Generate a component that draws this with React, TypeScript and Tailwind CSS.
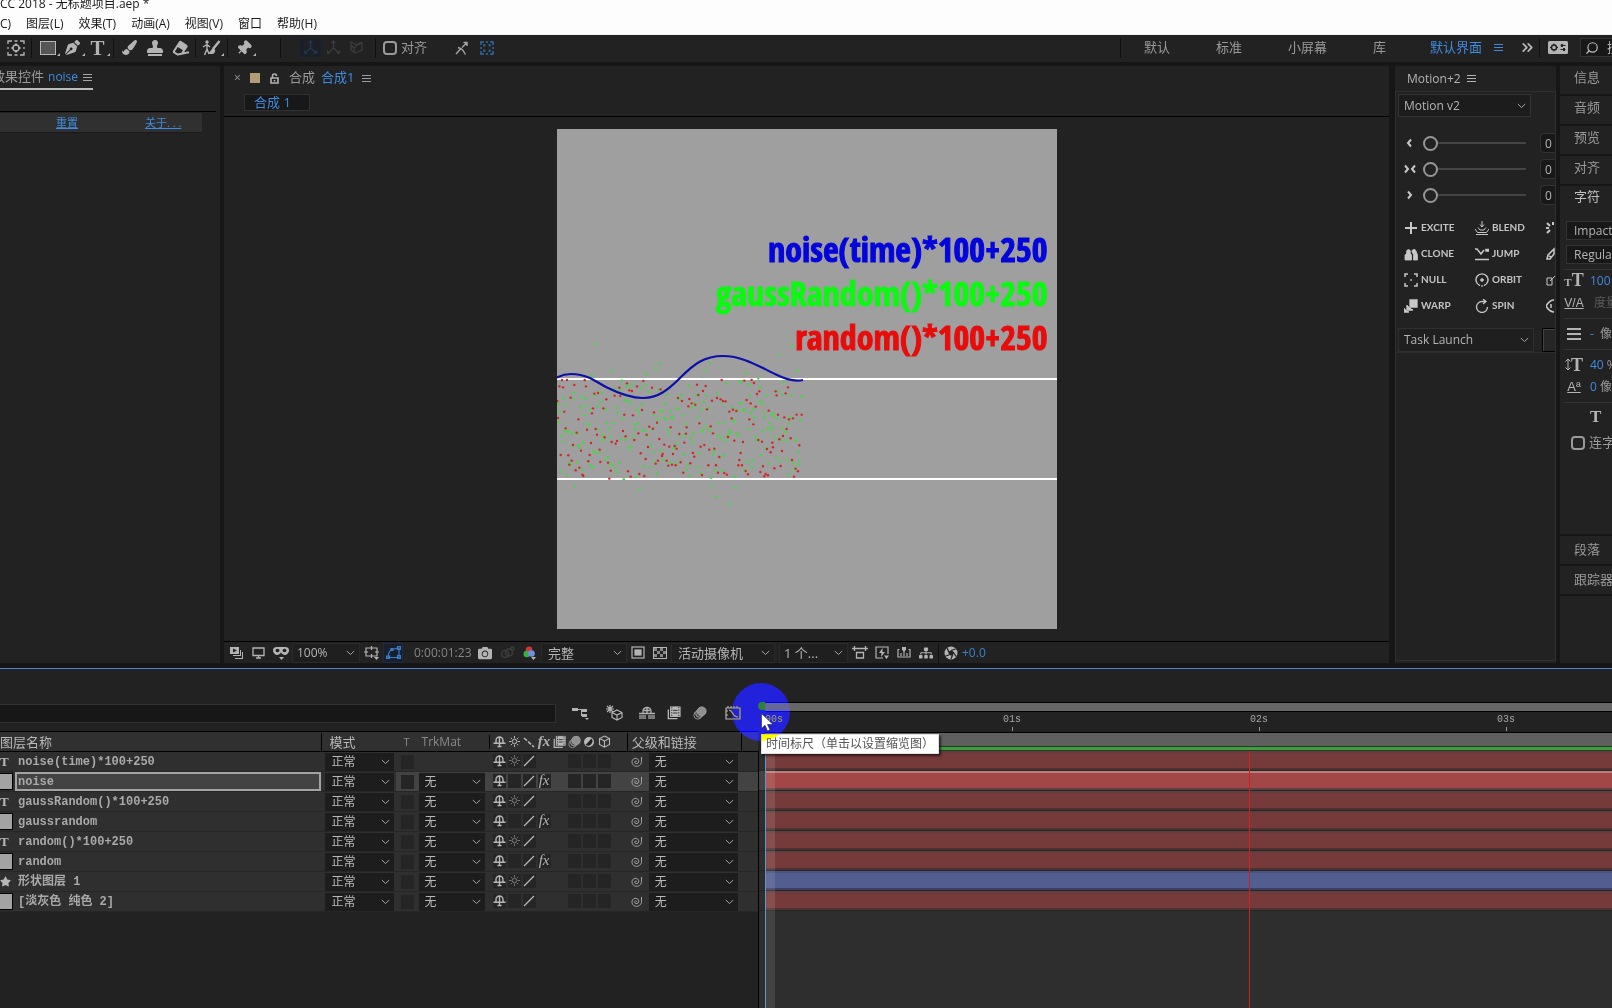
import { clsx } from 'clsx';
import { ChevronsRight, Pin, Search } from 'lucide-react';
import { FaCamera, FaEraser, FaPaintBrush, FaPenNib, FaSitemap, FaStamp, FaStar } from 'react-icons/fa';

const MENUS = ['C)', '图层(L)', '效果(T)', '动画(A)', '视图(V)', '窗口', '帮助(H)'];

const LAYERS = [
  { name: 'noise(time)*100+250', kind: 'text', fx: false, sun: true, matte: false },
  { name: 'noise', kind: 'solid', fx: true, sun: false, matte: true, selected: true },
  { name: 'gaussRandom()*100+250', kind: 'text', fx: false, sun: true, matte: true },
  { name: 'gaussrandom', kind: 'solid', fx: true, sun: false, matte: true },
  { name: 'random()*100+250', kind: 'text', fx: false, sun: true, matte: true },
  { name: 'random', kind: 'solid', fx: true, sun: false, matte: true },
  { name: '形状图层 1', kind: 'shape', fx: false, sun: true, matte: true },
  { name: '[淡灰色 纯色 2]', kind: 'solid', fx: false, sun: false, matte: true },
];

// samples of random(), in thirds of a composition pixel
const RED_DOTS = [
  [66, 90], [81, 90], [134, 90], [103, 105], [58, 109], [69, 112], [138, 109], [92, 143], [52, 153], [73, 185],
  [54, 204], [163, 131], [174, 129], [199, 148], [159, 175], [156, 190], [190, 175], [115, 208], [77, 235], [110, 248],
  [141, 239], [167, 237], [171, 254], [194, 262], [99, 285], [153, 279], [179, 299], [123, 302], [62, 315], [85, 316],
  [95, 332], [88, 344], [149, 315], [145, 334], [181, 336], [204, 338], [118, 353], [107, 361], [127, 374], [130, 378],
  [212, 362], [208, 386], [238, 113], [224, 137], [241, 138], [261, 100], [268, 121], [276, 123], [291, 109], [310, 93],
  [336, 113], [362, 118], [253, 194], [279, 196], [306, 180], [342, 187], [351, 218], [328, 230], [339, 236], [249, 243],
  [257, 259], [295, 250], [283, 270], [320, 254], [215, 276], [231, 273], [227, 281], [358, 267], [324, 291], [302, 310],
  [317, 327], [373, 284], [388, 290], [404, 288], [410, 296], [368, 312], [366, 318], [399, 312], [354, 332], [347, 341],
  [380, 332], [385, 347], [396, 344], [407, 346], [422, 337], [264, 364], [272, 380], [298, 372], [313, 378], [430, 368],
  [414, 144], [426, 153], [448, 147], [455, 160], [466, 164], [445, 169], [471, 104], [497, 108], [489, 123], [475, 135],
  [516, 152], [531, 144], [542, 148], [549, 153], [557, 154], [545, 90], [501, 178], [568, 185], [579, 179], [589, 183],
  [575, 205], [392, 232], [440, 232], [418, 252], [438, 251], [478, 220], [512, 229], [519, 250], [433, 278], [482, 290],
  [493, 285], [508, 299], [523, 296], [459, 309], [463, 320], [451, 340], [538, 321], [505, 346], [528, 346], [486, 375],
  [534, 368], [553, 369], [561, 374], [564, 261], [583, 272], [609, 276], [602, 309], [598, 330], [595, 346], [606, 346],
  [617, 363], [624, 373], [613, 92], [635, 90], [642, 99], [658, 124], [651, 132], [620, 150], [632, 160], [647, 170],
  [686, 182], [628, 208], [640, 223], [707, 124], [710, 136], [744, 112], [737, 130], [714, 194], [733, 202], [747, 208],
  [759, 205], [770, 194], [785, 194], [740, 237], [729, 258], [718, 268], [752, 265], [655, 270], [666, 275], [697, 278],
  [699, 292], [681, 297], [692, 307], [726, 303], [778, 286], [756, 330], [722, 348], [703, 355], [669, 349], [661, 366],
  [677, 372], [684, 376], [673, 379], [767, 356], [774, 364], [762, 380],
];

// samples of gaussRandom(), spread around the middle of the band
const GREEN_DOTS = (() => {
  let seed = 71;
  const rand = () => {
    seed = (seed * 16807) % 2147483647;
    return seed / 2147483647;
  };
  return Array.from({ length: 260 }, (_, i) => {
    const g = rand() + rand() + rand() + rand() - 2;
    return [i * 0.94 + 1, 298 + g * 52];
  });
})();

function MenuLines({ className }: { className?: string }) {
  return (
    <svg width="9" height="9" viewBox="0 0 9 9" className={className} stroke="currentColor">
      <path d="M0 1.5h9M0 4.5h9M0 7.5h9" />
    </svg>
  );
}

function Chevron() {
  return (
    <svg width="9" height="6" viewBox="0 0 9 6" fill="none" stroke="#a5a5a5" className="pointer-events-none absolute right-1 top-1/2 -mt-[3px]">
      <path d="M.8 1l3.7 3.5L8.200 1" />
    </svg>
  );
}

function Dropdown({ label, value, className, selectClass }: { label: string; value: string; className?: string; selectClass?: string }) {
  return (
    <div className={clsx('relative shrink-0', className)}>
      <select aria-label={label} className={clsx('block h-full w-full appearance-none outline-none', selectClass)}>
        <option>{value}</option>
      </select>
      <Chevron />
    </div>
  );
}

function Sep() {
  return (
    <div className="flex w-[7px] shrink-0 justify-center">
      <div className="h-5 w-px bg-[#111]" />
    </div>
  );
}

function Tool({ label, corner, children }: { label: string; corner?: boolean; children: React.ReactNode }) {
  return (
    <button aria-label={label} className="relative flex h-6 w-[25px] shrink-0 items-center justify-center text-[#b4b4b4]">
      {children}
      {corner && <span className="absolute bottom-1 right-0 border-b-[3px] border-l-[3px] border-b-[#b4b4b4] border-l-transparent" />}
    </button>
  );
}

function Shy() {
  return (
    <svg width="13" height="13" viewBox="0 0 13 13" fill="none" stroke="#b8b8b8" strokeWidth="1.4">
      <path d="M3 7.500V5.500a3.500 3.500 0 0 1 7 0v2M.5 8.200h12M6.500 2v10M4.500 11.500h4" />
    </svg>
  );
}

function Sun({ color }: { color: string }) {
  return (
    <svg width="13" height="13" viewBox="0 0 13 13" fill="none" stroke={color}>
      <circle cx="6.500" cy="6.500" r="2.200" />
      <path d="M6.500 1v2.500M6.500 9.500V12M1 6.500h2.500M9.500 6.500H12M2.800 2.800l1.500 1.500M8.700 8.700l1.500 1.500M10.200 2.800L8.700 4.300M4.300 8.700l-1.500 1.500" />
    </svg>
  );
}

function Film({ className }: { className?: string }) {
  return (
    <svg width="14" height="14" viewBox="0 0 16 16" fill="none" stroke="#b8b8b8" className={className}>
      <path d="M1.500 4v10.500H12" strokeWidth="1.500" />
      <rect x="4" y="1" width="11" height="11" fill="#b8b8b8" />
      <path d="M5.500 1v11M13.500 1v11" stroke="#222" strokeDasharray="1.500 1.500" />
      <path d="M7 5h5M7 8h5" stroke="#222" />
    </svg>
  );
}

function Blur({ className }: { className?: string }) {
  return (
    <svg width="14" height="14" viewBox="0 0 16 16" stroke="#a5a5a5" className={className}>
      <circle cx="5.500" cy="10.500" r="4.500" fill="#222" />
      <circle cx="7.500" cy="8.500" r="4.500" fill="#555" />
      <circle cx="10" cy="6" r="5" fill="#909090" />
    </svg>
  );
}

function Cube() {
  return (
    <svg width="13" height="13" viewBox="0 0 13 13" fill="none" stroke="#b8b8b8" strokeWidth="1.100">
      <path d="M6.500 1l5 2.500v6l-5 2.700-5-2.700v-6zM1.500 3.500l5 2.500 5-2.500M6.500 6v6" />
    </svg>
  );
}

function Spiral() {
  return (
    <svg width="13" height="13" viewBox="0 0 13 13" fill="none" stroke="#a8a8a8">
      <path d="M6.300 6.700c.5-.8-.9-1.200-1.300-.3-.7 1.400.6 2.500 1.900 2.200 1.900-.4 2.400-2.700 1.300-4.100C6.700 2.700 3.700 3 2.500 5 1.200 7.300 2.500 10.500 5.300 11.200c3.200.7 6.200-1.400 6.200-4.700V2" />
    </svg>
  );
}

function Fx() {
  return <span className="font-['Liberation_Serif'] text-[15px] leading-[15px] italic text-[#b0b0b0]">fx</span>;
}

function TopBar() {
  return (
    <header className="shrink-0 bg-[#fdfdfd] text-xs text-[#1a1a1a]">
      <div className="flex h-[14px] items-end overflow-hidden whitespace-nowrap">
        <span className="leading-5">CC 2018 - 无标题项目.aep *</span>
      </div>
      <nav className="flex h-[21px] items-center gap-[15px] border-b border-[#eef0f2]">
        {MENUS.map((m) => (
          <button key={m} className="whitespace-nowrap leading-5">{m}</button>
        ))}
      </nav>
    </header>
  );
}

function Toolbar() {
  return (
    <div className="flex h-[27px] shrink-0 items-center overflow-hidden bg-[#222] pb-[2px] text-[13px] text-[#9a9a9a]">
      <div className="flex w-7 shrink-0 justify-center pl-1">
        <Tool label="锚点">
          <svg width="18" height="16" viewBox="0 0 18 16" fill="none" stroke="#b4b4b4" strokeWidth="1.300">
            <path d="M1 4V1h4M13 1h4v3M17 12v3h-4M5 15H1v-3M7.500 1h3M7.500 15h3M1 7v2M17 7v2" />
            <circle cx="9" cy="8" r="3" />
            <path d="M9 3.500v2M9 10.500v2M4.500 8h2M11.500 8h2" strokeWidth="2" />
          </svg>
        </Tool>
      </div>
      <Sep />
      <Tool label="矩形" corner>
        <span className="h-[14px] w-4 border border-[#b4b4b4] bg-[#555]" />
      </Tool>
      <Tool label="钢笔" corner><FaPenNib size={15} /></Tool>
      <Tool label="文字" corner>
        <span className="font-['Liberation_Serif'] text-[21px] font-bold leading-5">T</span>
      </Tool>
      <Sep />
      <Tool label="画笔"><FaPaintBrush size={15} /></Tool>
      <Tool label="仿制图章"><FaStamp size={16} /></Tool>
      <Tool label="橡皮擦"><FaEraser size={16} className="-rotate-12" /></Tool>
      <Sep />
      <Tool label="Roto 笔刷" corner>
        <svg width="19" height="16" viewBox="0 0 19 16" fill="none" stroke="#b4b4b4" strokeWidth="1.400">
          <circle cx="5" cy="2" r="1" fill="#b4b4b4" />
          <path d="M5 4v5l-2.500 6M5 9l2 5M1 7l4-2.500L8 7" />
          <path d="M17.500 1L11 9" strokeWidth="2.500" />
          <path d="M11.500 9c-2 0-2 3-4 4 2.500 1 5 0 5-2.500z" fill="#b4b4b4" />
        </svg>
      </Tool>
      <Sep />
      <Tool label="操控点" corner><Pin size={16} fill="#b4b4b4" className="rotate-45" /></Tool>
      <div className="w-[21px] shrink-0" />
      <Sep />
      <div className="ml-[15px] flex shrink-0">
        {['本地轴', '世界轴', '视图轴'].map((a, i) => (
          <button key={a} aria-label={a} className={clsx('flex h-5 w-[23px] items-center justify-center', i === 0 && 'border border-[#1c2430] bg-[#1c2026]')}>
            <svg width="15" height="15" viewBox="0 0 15 15" fill="none" stroke={i === 0 ? '#24364f' : '#3c3c3c'} strokeWidth="1.300">
              {i < 2 ? <path d="M7.500 1v7L2 13M7.500 8l5.500 5M5.500 3l2-2 2 2M1.500 10.500V13H4M13.500 10.500V13H11" /> : <path d="M2 2v8l4 3 7-3V3L8 5zM2 5l3 3 4-4 4-2M5 8v4" />}
            </svg>
          </button>
        ))}
      </div>
      <div className="ml-1"><Sep /></div>
      <label className="ml-1 flex items-center gap-1 whitespace-nowrap">
        <input type="checkbox" className="h-[14px] w-[14px] appearance-none rounded-sm border-2 border-[#9a9a9a]" />
        对齐
      </label>
      <div className="ml-7 flex items-center gap-3">
        <svg width="13" height="14" viewBox="0 0 13 14" fill="none" stroke="#a5a5a5" strokeWidth="1.400">
          <path d="M1 13l4.500-5M7 6.500L12 1.500M8.500 1.500h3.500V5M3 6.500l3 1 2 2 2.500 4" />
        </svg>
        <svg width="14" height="14" viewBox="0 0 14 14" fill="none" stroke="#356ba8" strokeWidth="1.400">
          <path d="M1 4V1h3M10 1h3v3M13 10v3h-3M4 13H1v-3M6 1h2M6 13h2M1 6v2M13 6v2M4 5.500V4h1.500M8.500 4H10v1.500M10 8.500V10H8.500M5.500 10H4V8.500" />
        </svg>
      </div>
      <div className="flex-1" />
      <nav className="flex items-center whitespace-nowrap">
        <div className="mr-5"><Sep /></div>
        <button className="mr-[46px]">默认</button>
        <button className="mr-[46px]">标准</button>
        <button className="mr-[46px]">小屏幕</button>
        <button className="mr-[44px]">库</button>
        <button className="flex items-center gap-3 text-[#3f8be0]">默认界面 <MenuLines /></button>
        <button aria-label="更多工作区" className="ml-4 text-[#b4b4b4]"><ChevronsRight size={17} strokeWidth={2.500} /></button>
      </nav>
      <Sep />
      <svg width="20" height="13" viewBox="0 0 20 13" className="ml-[5px] mr-3 shrink-0">
        <rect width="20" height="13" rx="1.500" fill="#b4b4b4" />
        <circle cx="6" cy="6.500" r="2.500" fill="none" stroke="#222" strokeWidth="1.500" />
        <path d="M6 2.500v1.500M6 9v1.500M2 6.500h1.500M8.500 6.500H10" stroke="#222" />
        <path d="M12.500 4.500h5M12.500 8.500h5" stroke="#222" />
        <path d="M14 3v3M16 7v3" stroke="#222" strokeWidth="2" />
      </svg>
      <label className="flex h-[19px] w-8 shrink-0 items-center overflow-hidden border border-r-0 border-[#333] bg-[#181818] pl-1">
        <Search size={14} className="shrink-0 -scale-x-100 text-[#c0c0c0]" />
        <input aria-label="搜索帮助" placeholder="搜索帮助" className="ml-2 w-16 shrink-0 bg-transparent outline-none placeholder:text-[#b0b0b0]" />
      </label>
    </div>
  );
}

function EffectPanel() {
  return (
    <aside className="w-[220px] shrink-0 overflow-hidden bg-[#222] text-[13px]">
      <div className="flex h-6 w-[93px] items-center gap-1 whitespace-nowrap border-b-2 border-[#b9bcbc] text-[#9a9a9a]">
        <span className="-ml-2">效果控件</span>
        <span className="text-xs text-[#3f8be0]">noise</span>
        <MenuLines className="ml-px shrink-0 text-[#a5a5a5]" />
      </div>
      <div className="mr-1 mt-[21px] border-t border-black pt-px">
        <div className="flex h-5 w-[202px] items-center border-b border-[#191919] bg-[#303030] pl-14 text-[11px] leading-4 text-[#3f8be0]">
          <a href="#reset" className="underline">重置</a>
          <a href="#about" className="ml-[67px] underline">关于. . .</a>
        </div>
      </div>
    </aside>
  );
}

function Composition() {
  return (
    <div className="relative h-[500px] w-[500px] overflow-hidden bg-[#9f9f9f]">
      <svg viewBox="0 0 500 500" className="absolute inset-0">
        <path d="M0 250h500M0 350h500" stroke="#fff" strokeWidth="2" />
        {GREEN_DOTS.map(([x, y], i) => (
          <circle key={i} cx={x} cy={y} r="1.200" fill="#3edc3e" />
        ))}
        <g transform="translate(-17 221) scale(.3333)">
          {RED_DOTS.map(([x, y]) => (
            <circle key={`${x}-${y}`} cx={x} cy={y} r="3.600" fill="#d22626" />
          ))}
        </g>
        <path
          d="M0 248.500C5 246 9 245 14 245c7 0 13 1.500 19 4 6 3 11 6.500 17 9.500 12 6 24 10.500 36 10.500 15 0 25-8 37-20 14-14 24-22 43-22 20 0 37 11 53 18.500 12 6 20 7 27 5.500"
          fill="none"
          stroke="#0c10a8"
          strokeWidth="2.200"
        />
      </svg>
      <div className="relative flex flex-col items-end pr-[9px] pt-[98px] font-['Impact','Noto_Sans_ExtraCondensed','Open_Sans_Condensed','Liberation_Sans_Narrow',sans-serif] text-[34px] font-black leading-[44px]">
        <span className="text-[#0404dc] [-webkit-text-stroke:1px_#0404dc]">noise(time)*100+250</span>
        <span className="text-[#0cf812] [-webkit-text-stroke:1px_#0cf812]">gaussRandom()*100+250</span>
        <span className="text-[#e80c0c] [-webkit-text-stroke:1px_#e80c0c]">random()*100+250</span>
      </div>
    </div>
  );
}

function ViewerBar() {
  return (
    <div className="flex h-[22px] items-center overflow-hidden border-t border-black pl-[6px] text-[13px] text-[#b4b4b4]">
      <svg width="14" height="12" viewBox="0 0 14 12" className="shrink-0" fill="#b4b4b4">
        <path d="M0 0h9v7H0zM10 3h1v6H3V8h7zM12 5h1v7H5v-1h7z" />
        <path d="M3 1.500L7 3.500l-4 2z" fill="#222" />
      </svg>
      <svg width="13" height="12" viewBox="0 0 13 12" className="ml-2 shrink-0" fill="none" stroke="#b4b4b4" strokeWidth="1.300">
        <path d="M1 1h11v7.500H1zM6.500 8.500v2.500M4 11h5" />
      </svg>
      <svg width="16" height="14" viewBox="0 0 16 14" className="ml-2 shrink-0" fill="#b4b4b4">
        <path d="M4 1h8c3 0 4 1.500 4 3.500S14 9 12 9c-1.700 0-3-1-4-2.500C7 8 5.700 9 4 9 2 9 0 6.500 0 4.500S1 1 4 1zM6 11h5l-2.500 3z" />
        <path d="M2.500 4.500a2 1.700 0 1 0 4 0 2 1.700 0 1 0-4 0M9.500 4.500a2 1.700 0 1 0 4 0 2 1.700 0 1 0-4 0" fill="#222" />
      </svg>
      <Dropdown label="放大率" value="100%" className="ml-[3px] h-5 w-[68px] border border-[#2a2a2a] bg-[#1f1f1f]" selectClass="pl-1 text-xs" />
      <svg width="16" height="14" viewBox="0 0 16 14" className="ml-1 shrink-0" fill="none" stroke="#b4b4b4" strokeWidth="1.200">
        <path d="M2 2h11v8H2zM7.500 0v4M7.500 8v4M0 6h4M11 6h4" />
        <path d="M10 11h5l-2.500 3z" fill="#b4b4b4" stroke="none" />
      </svg>
      <button aria-label="蒙版和形状路径" className="ml-[3px] flex h-5 w-5 items-center justify-center border border-[#1a2c44] bg-[#17202c]">
        <svg width="15" height="13" viewBox="0 0 15 13" fill="none" stroke="#3a7cc8" strokeWidth="1.200">
          <path d="M2 11.500C2.500 6 4 4 6 3.500L13 2v9.500zM.500 10h3v2.500h-3zM11.500.500h3v3h-3zM11.500 9.500h3v3h-3zM5 2.500h2v2H5z" />
        </svg>
      </button>
      <span className="ml-[11px] w-[56px] text-xs text-[#858585]">0:00:01:23</span>
      <FaCamera size={14} className="ml-2 shrink-0" />
      <svg width="15" height="13" viewBox="0 0 15 13" className="ml-2 shrink-0" fill="none" stroke="#3c3c3c" strokeWidth="1.600">
        <circle cx="5" cy="8" r="3.500" />
        <circle cx="9" cy="6.500" r="3.500" />
        <circle cx="12.500" cy="2.500" r="1.500" />
      </svg>
      <svg width="14" height="14" viewBox="0 0 14 14" className="ml-2 shrink-0">
        <circle cx="6" cy="3.800" r="3.300" fill="#d83434" />
        <circle cx="3.800" cy="8" r="3.300" fill="#36b046" />
        <circle cx="8.500" cy="7.500" r="3.300" fill="#6f8fe0" />
        <path d="M8 11h5l-2.500 3z" fill="#b4b4b4" />
      </svg>
      <Dropdown label="分辨率" value="完整" className="ml-1 h-5 w-[86px] border border-[#2a2a2a] bg-[#1f1f1f]" selectClass="pl-[6px]" />
      <svg width="14" height="13" viewBox="0 0 14 13" className="ml-1 shrink-0" fill="none" stroke="#b4b4b4" strokeWidth="1.200">
        <rect x="1" y="1" width="12" height="11" />
        <rect x="4" y="4" width="6" height="5" fill="#b4b4b4" />
      </svg>
      <svg width="14" height="12" viewBox="0 0 14 12" className="ml-2 shrink-0" fill="none" stroke="#b4b4b4">
        <rect x=".5" y=".5" width="13" height="11" />
        <path d="M1 2.500h12M1 8.500h12" strokeWidth="3" strokeDasharray="3 3" stroke="#888" />
        <path d="M4 5.500h9" strokeWidth="3" strokeDasharray="3 3" stroke="#888" />
      </svg>
      <Dropdown label="3D 视图" value="活动摄像机" className="ml-1 h-5 w-[104px] border border-[#2a2a2a] bg-[#1f1f1f]" selectClass="pl-[6px]" />
      <Dropdown label="视图布局" value="1 个..." className="ml-1 h-5 w-[69px] border border-[#2a2a2a] bg-[#1f1f1f]" selectClass="pl-1" />
      <svg width="16" height="13" viewBox="0 0 16 13" className="ml-1 shrink-0" fill="none" stroke="#b4b4b4" strokeWidth="1.300">
        <path d="M0 2.500h16M2.500 0v5M13.500 0v5M4.500 6.500h7v5.500h-7z" />
      </svg>
      <svg width="14" height="13" viewBox="0 0 14 13" className="ml-[7px] shrink-0" fill="none" stroke="#b4b4b4" strokeWidth="1.200">
        <path d="M8 12H1V1h12v7" />
        <path d="M7.500 2L4 7h2.500L6 11l4-5H7.500zM9 9.500h5L11.500 13z" fill="#b4b4b4" stroke="none" />
      </svg>
      <svg width="14" height="13" viewBox="0 0 14 13" className="ml-2 shrink-0" fill="none" stroke="#b4b4b4" strokeWidth="1.200">
        <path d="M2.500 3.500H1V11h12V3.500h-1.500M4 7v3M7 4v6M10 7v3" />
        <path d="M5 1h4v2.500L7 6 5 3.500z" fill="#b4b4b4" stroke="none" />
      </svg>
      <FaSitemap size={14} className="ml-2 mr-[2px] shrink-0" />
      <Sep />
      <svg width="14" height="14" viewBox="0 0 14 14" className="ml-[2px] shrink-0">
        <circle cx="7" cy="7" r="6.500" fill="#b4b4b4" />
        <path d="M7 4.500L11.500 3M9.200 6l2.800 4.500M8.500 9L7 13M5 9L1.500 10M4.800 6L3 1.800" stroke="#222" strokeWidth="1.300" />
        <circle cx="7" cy="7" r="2.500" fill="#222" />
      </svg>
      <span className="ml-1 text-xs text-[#3a80cc]">+0.0</span>
    </div>
  );
}

function CompPanel() {
  return (
    <main className="mr-[2px] flex min-w-0 flex-1 flex-col bg-[#222] text-[13px]">
      <div className="h-[51px] border-b border-black">
        <div className="flex h-6 items-center whitespace-nowrap pl-[10px] text-[#9a9a9a]">
          <button aria-label="关闭" className="text-xs">×</button>
          <span className="ml-[9px] h-[10px] w-[10px] bg-[#b29d78]" />
          <svg width="9" height="11" viewBox="0 0 9 11" className="ml-[10px]" fill="none" stroke="#b4b4b4" strokeWidth="1.600">
            <path d="M1 5h7v5H1zM2.500 5V3a2 2 0 0 1 4 0M4.500 7v1.500" />
          </svg>
          <span className="ml-[10px]">合成</span>
          <span className="ml-[6px] text-[#3f8be0]">合成1</span>
          <MenuLines className="ml-2" />
        </div>
        <button className="ml-5 mt-1 block h-[17px] w-[66px] border border-[#303030] bg-[#181818] pl-[9px] text-left leading-[15px] text-[#3f8be0]">合成 1</button>
      </div>
      <div className="flex flex-1 items-center justify-center overflow-hidden py-3">
        <Composition />
      </div>
      <ViewerBar />
    </main>
  );
}

const MOTION_ICONS: Record<string, React.ReactNode> = {
  EXCITE: <path d="M7 1v12M1 7h12" strokeWidth="2" />,
  BLEND: <path d="M7 0v6M5 3.500l2 2.500 2-2.500M0 8l2.500 3.500h9L14 8M3 6.500L5 9h4l2-2.500M1 13.500h12" />,
  CLONE: <path d="M1 13V8l2-2a2 2 0 1 1 3 0l1.500 2v5zM9.500 13V7.500L8 5a2 2 0 1 1 4-1l1.500 4v5z" fill="#c8c8c8" strokeWidth=".8" />,
  JUMP: <path d="M0 2h2l4 5 3-4M0 12.500h14M11 2.500h2.500v1.500H11z" strokeWidth="1.500" />,
  NULL: <path d="M1 4V1h3M10 1h3v3M13 10v3h-3M4 13H1v-3M6.200 7h1.800" strokeWidth="1.500" />,
  ORBIT: <path d="M5 12.500a6 6 0 1 1 4 0M6.200 13h1.600M7 5v4M5 7h4" strokeWidth="1.400" />,
  WARP: <path d="M6 1h7v7H6zM3 6v5h6M0 9v4h5" fill="#c8c8c8" strokeWidth="1.300" />,
  SPIN: <path d="M12.500 8a5.500 5.500 0 1 1-5.500-5.500h3M8 0l3 2.500L8 5" strokeWidth="1.300" />,
  BURST: <path d="M1 2l3 3M0 7h3M1 12l3-3M7 1v3" strokeWidth="2" />,
  NAME: <path d="M1 12l1-4 6-6v5l-4 5zM3 9l2 1" strokeWidth="1.500" />,
  ROPE: <path d="M1 5h5v7H1zM4 8l5-5" />,
  STARE: <path d="M0 7c3-5 5-6 8-6M0 7c3 5 5 6 8 6M5 5v4" strokeWidth="1.500" />,
};

const MOTION_ROWS = [
  ['EXCITE', 'BLEND', 'BURST'],
  ['CLONE', 'JUMP', 'NAME'],
  ['NULL', 'ORBIT', 'ROPE'],
  ['WARP', 'SPIN', 'STARE'],
];

function MotionButton({ label, iconOnly }: { label: string; iconOnly?: boolean }) {
  return (
    <button aria-label={label} className="flex w-[71px] shrink-0 items-center gap-[3px] font-['Lato'] text-[10px] font-bold text-[#c4c4c4]">
      <svg width="14" height="14" viewBox="0 0 14 14" className="shrink-0" fill="none" stroke="#c8c8c8">
        {MOTION_ICONS[label]}
      </svg>
      {!iconOnly && label}
    </button>
  );
}

function MotionPanel() {
  const ease = [
    { label: 'ease in', d: 'M7 2.500L4 6l3 3.500' },
    { label: 'ease both', d: 'M1 2.500L4 6 1 9.500M11 2.500L8 6l3 3.500' },
    { label: 'ease out', d: 'M4 2.500L7 6 4 9.500' },
  ];
  return (
    <aside className="flex w-[161px] shrink-0 flex-col overflow-hidden bg-[#222] text-xs text-[#b4b4b4]">
      <div className="flex h-[25px] items-center gap-[6px] pl-3 leading-5">
        Motion+2 <MenuLines />
      </div>
      <div className="mb-[2px] flex-1 overflow-hidden border border-[#303030] pt-[2px]">
        <Dropdown label="脚本" value="Motion v2" className="ml-[2px] h-[23px] w-[133px] border border-[#333] bg-[#1c1c1c]" selectClass="pl-[5px]" />
        <div className="mt-4 flex flex-col gap-[6px]">
          {ease.map((e) => (
            <div key={e.label} className="flex h-5 items-center pl-2">
              <svg width="12" height="12" viewBox="0 0 12 12" className="shrink-0" fill="none" stroke="#c8c8c8" strokeWidth="2">
                <path d={e.d} />
              </svg>
              <input
                type="range"
                aria-label={e.label}
                defaultValue={0}
                className="ml-[7px] h-4 w-[103px] shrink-0 appearance-none bg-transparent bg-[linear-gradient(#444,#444)] bg-[length:100%_2px] bg-center bg-no-repeat [&::-webkit-slider-thumb]:h-[15px] [&::-webkit-slider-thumb]:w-[15px] [&::-webkit-slider-thumb]:appearance-none [&::-webkit-slider-thumb]:rounded-full [&::-webkit-slider-thumb]:border-2 [&::-webkit-slider-thumb]:border-[#969696] [&::-webkit-slider-thumb]:bg-[#222]"
              />
              <input aria-label={`${e.label} value`} defaultValue="0" className="ml-[14px] h-5 w-8 shrink-0 rounded-sm border border-[#333] bg-[#181818] pl-1 outline-none" />
            </div>
          ))}
        </div>
        <div className="mt-[13px] flex flex-col gap-[6px] pl-2">
          {MOTION_ROWS.map((row) => (
            <div key={row[0]} className="flex h-5">
              {row.map((label, i) => <MotionButton key={label} label={label} iconOnly={i === 2} />)}
            </div>
          ))}
        </div>
        <div className="mt-3 flex gap-2 border-b border-[#2d2d2d] pl-[2px]">
          <Dropdown label="任务" value="Task Launch" className="h-6 w-[136px] border border-[#303030] bg-[#1f1f1f]" selectClass="pl-[5px]" />
          <button aria-label="启动" className="h-6 w-8 shrink-0 border border-black bg-[#262626] shadow-[inset_1px_1px_0_#444]" />
        </div>
      </div>
    </aside>
  );
}

function CharRow({ icon, children }: { icon: React.ReactNode; children: React.ReactNode }) {
  return (
    <div className="flex h-[22px] items-center gap-[6px] text-xs">
      <span className="flex w-5 shrink-0 items-baseline justify-center font-['Liberation_Serif'] font-bold text-[#b4b4b4]">{icon}</span>
      {children}
    </div>
  );
}

function SidePanel() {
  return (
    <aside className="w-[52px] shrink-0 overflow-hidden whitespace-nowrap bg-[#222] text-[13px] text-[#9a9a9a]">
      {['信息', '音频', '预览', '对齐'].map((t) => (
        <button key={t} className="block h-[30px] w-full border-b-2 border-[#161616] pb-1 pl-[14px] text-left">{t}</button>
      ))}
      <div className="h-[35px] pl-[14px] pt-px text-[#c0c0c0]">字符</div>
      <div className="flex flex-col gap-[5px] pl-[6px]">
        <input aria-label="字体" defaultValue="Impact" className="h-[19px] w-20 border border-[#333] bg-[#181818] pl-[7px] text-xs text-[#b4b4b4] outline-none" />
        <input aria-label="字体样式" defaultValue="Regular" className="h-[19px] w-20 border border-[#333] bg-[#181818] pl-[7px] text-xs text-[#b4b4b4] outline-none" />
      </div>
      <div className="ml-1 mt-[5px] border-t border-[#333]">
        <CharRow icon={<><span className="text-[11px]">T</span><span className="text-lg leading-4">T</span></>}>
          <span><span className="text-[#3f8be0]">100</span> 像素</span>
        </CharRow>
        <CharRow icon={<span className="font-['Liberation_Sans'] text-xs font-normal underline">V/A</span>}>
          <span className="ml-1 text-[#5a5a5a]">度量标准</span>
        </CharRow>
      </div>
      <div className="ml-1 mt-1 border-t border-[#333] py-1">
        <CharRow icon={<svg width="14" height="12" viewBox="0 0 14 12" stroke="#b4b4b4" strokeWidth="2"><path d="M0 1h14M0 6h14M0 11h14" /></svg>}>
          <span><span className="text-[#3f8be0]">-</span>&nbsp; 像素</span>
        </CharRow>
      </div>
      <div className="ml-1 border-t border-[#333] pt-1">
        <CharRow
          icon={
            <>
              <svg width="6" height="13" viewBox="0 0 6 13" stroke="#b4b4b4" fill="none"><path d="M3 1v11M.5 3.500L3 1l2.500 2.500M.5 9.500L3 12l2.500-2.500" /></svg>
              <span className="text-lg leading-4">T</span>
            </>
          }
        >
          <span><span className="text-[#3f8be0]">40</span> %</span>
        </CharRow>
        <CharRow icon={<span className="font-['Liberation_Sans'] text-[13px] font-normal underline">Aª</span>}>
          <span><span className="text-[#3f8be0]">0</span> 像素</span>
        </CharRow>
      </div>
      <div className="ml-1 mt-1 border-t border-[#333]">
        <button aria-label="仿粗体" className="ml-[26px] mt-1 block font-['Liberation_Serif'] text-[17px] font-bold leading-5 text-[#b4b4b4]">T</button>
      </div>
      <label className="ml-[11px] mt-[6px] flex h-5 items-center gap-1">
        <input type="checkbox" className="h-[14px] w-[14px] shrink-0 appearance-none rounded-sm border-2 border-[#9a9a9a]" />
        连字
      </label>
      <div className="mt-[81px] border-t-2 border-[#161616]">
        {['段落', '跟踪器'].map((t) => (
          <button key={t} className="block h-[30px] w-full border-b-2 border-[#161616] pl-[14px] text-left">{t}</button>
        ))}
      </div>
    </aside>
  );
}

function Cell({ dark, children }: { dark?: boolean; children?: React.ReactNode }) {
  return <span className={clsx('flex h-[14px] w-[15px] shrink-0 items-center justify-center bg-clip-content px-px', dark && 'bg-[#252525]')}>{children}</span>;
}

function LayerTable() {
  return (
    <table className="w-full table-fixed border-collapse text-left text-xs text-[#b8b8b8]">
      <colgroup>
        <col className="w-[325px]" />
        <col className="w-[70px]" />
        <col className="w-[23px]" />
        <col className="w-[70px]" />
        <col className="w-[138px]" />
        <col className="w-[131px]" />
      </colgroup>
      <thead>
        <tr className="h-5 border-y border-black bg-[#303030] text-[13px] leading-[18px]">
          <th className="p-0 font-normal">
            <div className="mr-[3px] border-r border-black">图层名称</div>
          </th>
          <th className="p-0 pl-1 font-normal">模式</th>
          <th className="p-0 pl-2 text-[11px] font-normal text-[#8a8a8a]">T</th>
          <th className="p-0 pl-[3px] text-xs font-normal leading-[18px] text-[#8a8a8a]">TrkMat</th>
          <th className="p-0">
            <div className="flex items-center border-l border-black pl-[2px] leading-[18px]">
              <Cell><Shy /></Cell>
              <Cell><Sun color="#b8b8b8" /></Cell>
              <Cell>
                <svg width="12" height="12" viewBox="0 0 12 12" stroke="#b8b8b8" strokeWidth="1.500"><path d="M1 2l10 9" strokeDasharray="4 1.500" /></svg>
              </Cell>
              <Cell><Fx /></Cell>
              <Cell><Film /></Cell>
              <Cell><Blur /></Cell>
              <Cell>
                <svg width="12" height="12" viewBox="0 0 12 12"><circle cx="6" cy="6" r="5" fill="#b8b8b8" /><path d="M8.500 2.500a4.500 4.500 0 0 1-6 6.500z" fill="#222" /></svg>
              </Cell>
              <Cell><Cube /></Cell>
            </div>
          </th>
          <th className="p-0 font-normal">
            <div className="mr-4 border-x border-black pl-1">父级和链接</div>
          </th>
        </tr>
      </thead>
      <tbody>
        {LAYERS.map((l) => (
          <tr key={l.name} className={clsx('h-5 border-b border-[#262626]', l.selected ? 'bg-[#434343]' : 'bg-[#2f2f2f]')}>
            <td className={clsx('p-0', l.selected && 'bg-[#2f2f2f]')}>
              <div className="flex h-[19px] items-center">
                <span className="flex w-[15px] shrink-0 items-center">
                  {l.kind === 'text' && <span className="font-['Liberation_Serif'] text-[13px] font-bold leading-4">T</span>}
                  {l.kind === 'solid' && <span className="h-[17px] w-[13px] border border-l-0 border-black bg-[#a3a3a3]" />}
                  {l.kind === 'shape' && <FaStar size={11} />}
                </span>
                <span
                  className={clsx(
                    "h-[19px] w-[306px] truncate font-['Liberation_Mono','Noto_Sans_CJK_SC',monospace] font-bold text-[#a9a9a9]",
                    l.selected ? 'border-2 border-[#a3a3a3] bg-[#434343] pl-px leading-[17px]' : 'pl-[3px] leading-[21px]',
                  )}
                >
                  {l.name}
                </span>
              </div>
            </td>
            <td className={clsx('p-0', l.selected && 'bg-[#2f2f2f]')}>
              <Dropdown label={`${l.name} 模式`} value="正常" className="h-[18px] w-[69px] bg-[#1d1d1d]" selectClass="pl-[6px]" />
            </td>
            <td className="p-0 pl-1"><Cell dark /></td>
            <td className="p-0">
              {l.matte && <Dropdown label={`${l.name} 轨道遮罩`} value="无" className="h-[18px] w-[66px] bg-[#1d1d1d]" selectClass="pl-[6px]" />}
            </td>
            <td className="p-0">
              <div className="flex items-center pb-[2px] pl-[3px]">
                <Cell dark><Shy /></Cell>
                <Cell dark>{l.sun && <Sun color="#777" />}</Cell>
                <Cell dark>
                  <svg width="12" height="12" viewBox="0 0 12 12" stroke="#b8b8b8" strokeWidth="1.300"><path d="M1 11L11 1" /></svg>
                </Cell>
                <Cell dark={l.fx}>{l.fx && <Fx />}</Cell>
                <Cell />
                <Cell dark />
                <Cell dark />
                <Cell dark />
              </div>
            </td>
            <td className={clsx('p-0', l.selected && 'bg-[#434343]')}>
              <div className="flex items-center gap-[6px] pl-[3px]">
                <Spiral />
                <Dropdown label={`${l.name} 父级`} value="无" className="h-[18px] w-[89px] bg-[#1d1d1d]" selectClass="pl-[6px]" />
              </div>
            </td>
          </tr>
        ))}
      </tbody>
    </table>
  );
}

function Timeline() {
  return (
    <section className="flex min-h-[339px] flex-1 overflow-hidden bg-[#222]">
      <div className="w-[758px] shrink-0">
        <div className="flex h-[62px] items-end pb-2 pr-4">
          <input aria-label="搜索图层" className="h-[19px] w-[556px] shrink-0 border border-l-0 border-[#303030] bg-[#171717] outline-none" />
          <div className="flex flex-1 items-center pb-[2px]">
            <svg width="17" height="14" viewBox="0 0 17 14" className="ml-4 shrink-0" fill="#b4b4b4">
              <path d="M0 2h6v3H0zM6 3h4v1H6zM9 3h1v7H9zM10 3h5v3h-5zM10 8h5v3h-5zM13 12h4l-2 2z" />
            </svg>
            <svg width="18" height="17" viewBox="0 0 18 17" className="ml-4 shrink-0" fill="none" stroke="#b4b4b4" strokeWidth="1.200">
              <path d="M5 1v8M1 5h8M2 2l6 6M8 2L2 8M12 6l5 2.500v5L12 16l-5-2.500v-5zM7 8.500l5 2.500 5-2.500M12 11v5" />
            </svg>
            <svg width="16" height="14" viewBox="0 0 16 14" className="ml-4 shrink-0" fill="none" stroke="#b4b4b4" strokeWidth="1.300">
              <path d="M4 7V5a4 3.500 0 0 1 8 0v2M8 1v7M5 4.500h6M0 7.500h16" />
              <path d="M0 9h7v4H0zM9 9h7v4H9z" fill="#777" stroke="none" />
            </svg>
            <Film className="ml-3 shrink-0" />
            <Blur className="ml-3 shrink-0" />
            <svg width="16" height="15" viewBox="0 0 16 15" className="ml-[18px] shrink-0" fill="none" stroke="#b4b4b4" strokeWidth="1.200">
              <path d="M1 3h14v11H1zM3 3V1M6 3V1M9 3V1M12 3V1M1 6h2M1 10h2M4 5c4 0 3 7 9 7" />
            </svg>
          </div>
        </div>
        <LayerTable />
      </div>

      <div className="relative flex min-w-0 flex-1 flex-col">
        <div className="ml-[7px] mt-[33px] h-[10px] border-y border-black bg-[#666]" />
        <div className="flex h-5 overflow-hidden pl-[7px] font-['Liberation_Mono',monospace] text-[10px] leading-[15px] text-[#a5a5a5]">
          <div className="w-[238px] shrink-0">00s</div>
          {['01s', '02s', '03s'].map((s) => (
            <div key={s} className="w-[247px] shrink-0">
              {s}
              <div className="ml-[9px] h-1 w-px bg-[#999]" />
            </div>
          ))}
        </div>
        <div className="ml-[7px] h-[14px] border-t border-black bg-[#5f5f5f]" />
        <div className="ml-[7px] h-[5px] border-b border-t border-[#1c4020] bg-[#429c46]" />
        <div className="relative flex flex-1 flex-col border-l border-black bg-[#2e2e2e]">
          {LAYERS.map((l) => (
            <div key={l.name} className={clsx('h-5 border-b border-[#262626] pl-[6px]', l.selected && 'bg-[#434343]')}>
              <div
                className={clsx(
                  'h-[19px] border-y-2',
                  l.selected ? 'border-b-[#5c4242] border-t-[#c07c78] bg-[#a34648]' : l.kind === 'shape' ? 'border-b-[#3d4062] border-t-[#4a527c] bg-[#525d90]' : 'border-b-[#4b3334] border-t-[#643e3e] bg-[#773a3b]',
                )}
              />
            </div>
          ))}
          <div className="absolute inset-y-0 left-[6px] w-[10px] border-l border-[#5f94cc] bg-white/10" />
          <div className="absolute inset-y-0 left-[490px] w-px bg-[#cc2222]" />
        </div>
        <div className="absolute left-[3px] top-[65px] whitespace-nowrap border border-[#e0e0e0] bg-white px-1 text-xs leading-[18px] text-[#555] shadow-[2px_2px_2px_rgba(0,0,0,0.6)]">
          时间标尺（单击以设置缩览图）
        </div>
        <div className="absolute -left-[26px] top-[14px] h-[58px] w-[58px] rounded-full bg-[#0000ff] mix-blend-difference" />
        <div className="absolute left-0 top-[33px] h-2 w-[7px] rounded-l-full bg-[#2b8040]" />
        <svg width="13" height="19" viewBox="0 0 13 19" className="absolute left-[3px] top-[44px]">
          <path d="M.5.500v15l3.500-3.200 2.500 5.700 2.500-1.200-2.500-5.300H12z" fill="#fff" stroke="#223" strokeWidth=".6" />
        </svg>
      </div>
    </section>
  );
}

export default function App() {
  return (
    <div className="flex min-h-screen flex-col overflow-hidden bg-[#161616] font-['Open_Sans','Noto_Sans_CJK_SC',sans-serif]">
      <TopBar />
      <Toolbar />
      <div className="flex shrink-0 gap-1 border-b border-[#4584d0] pb-[5px] pt-1">
        <EffectPanel />
        <CompPanel />
        <MotionPanel />
        <SidePanel />
      </div>
      <Timeline />
    </div>
  );
}
